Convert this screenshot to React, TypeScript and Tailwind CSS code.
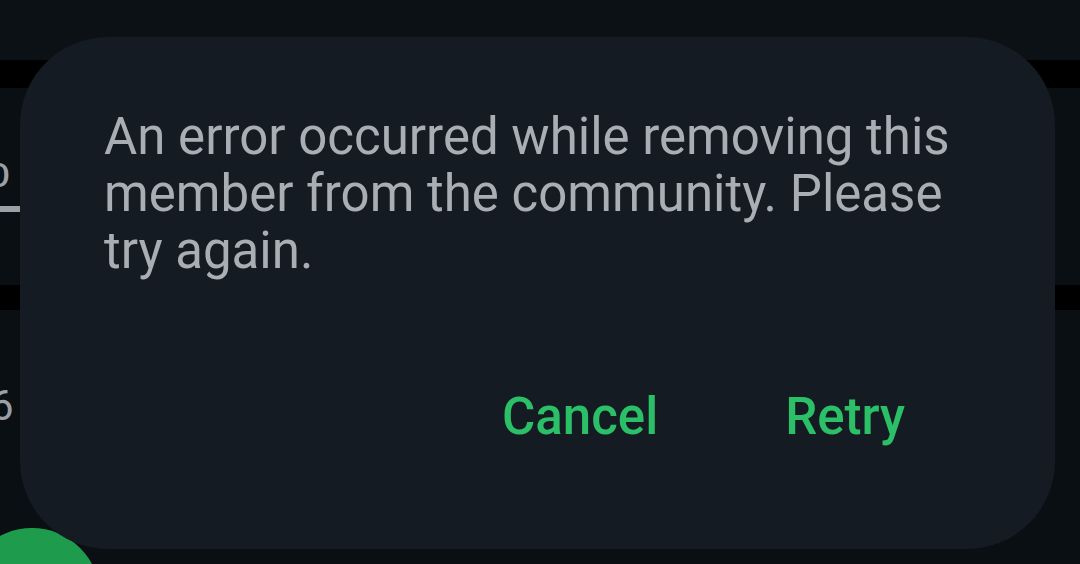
export default function App() {
  return (
    <div className="relative w-[1080px] h-[564px] overflow-hidden bg-[#0a0f14] font-['Roboto',sans-serif]">
      {/* background screen, dimmed behind the dialog */}
      <div className="flex flex-col h-full">
        <div className="h-[60px] bg-[#0c1116]" />
        <div className="h-[28px] bg-black" />
        <div className="h-[197px] bg-[#0a0f14] flex flex-col items-start">
          <div className="-ml-[12px] mt-[64px] text-[44px] leading-[40px] text-[#9aa0a6]">ɔ</div>
          <div className="mt-[14px] w-[20px] h-[6px] bg-[#9aa0a6]" />
        </div>
        <div className="h-[25px] bg-black" />
        <div className="flex-1 bg-[#0a0f14] flex flex-col">
          <div className="-ml-[10px] mt-[72px] text-[42px] leading-[48px] text-[#9aa0a6]">6</div>
          <div className="mt-auto -mb-[100px] ml-[-36px] w-[136px] h-[136px] rounded-full bg-[#1f9b4e]" />
        </div>
      </div>

      {/* dialog */}
      <div className="absolute left-[20px] top-[37px] w-[1035px] h-[512px] rounded-[88px] bg-[#151b22] flex flex-col">
        <p className="pl-[84px] pr-[84px] pt-[71px] text-[51px] leading-[57px] text-[#a8aeb4]">
          An error occurred while removing this member from the community. Please try again.
        </p>
        <div className="mt-auto mb-[96px] pr-[84px] flex justify-end">
          <button className="pl-[66px] pr-[61px] py-[8px] text-[51px] leading-[56px] font-medium text-[#2bc067]">Cancel</button>
          <button className="px-[66px] py-[8px] text-[51px] leading-[56px] font-medium text-[#2bc067]">Retry</button>
        </div>
      </div>
    </div>
  )
}
